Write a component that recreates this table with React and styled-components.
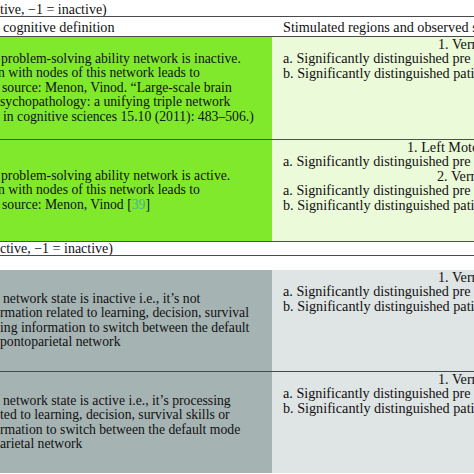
import React from 'react';
import styled, { createGlobalStyle } from 'styled-components';

const GlobalStyle = createGlobalStyle`
    html, body {
        margin:0;
        padding:0;
        background:#ffffff;
    }
`;

// 표 데이터 (잘려 보이는 부분 그대로)
const greenRows = [
    {
        left: [
            { text: 'problem-solving ability network is inactive.', shift: 1 },
            { text: 'n with nodes of this network leads to', shift: -2 },
            { text: 'source: Menon, Vinod. \u201cLarge-scale brain', shift: 2 },
            { text: 'sychopathology: a unifying triple network', shift: 0 },
            { text: 'in cognitive sciences 15.10 (2011): 483\u2013506.)', shift: 3 },
        ],
        right: [
            { text: '1. Vermis', shift: 166 },
            { text: 'a. Significantly distinguished pre and post', shift: 11 },
            { text: 'b. Significantly distinguished patients', shift: 11 },
        ],
    },
    {
        left: [
            { text: 'problem-solving ability network is active.', shift: 1 },
            { text: 'n with nodes of this network leads to', shift: -2 },
            { text: 'source: Menon, Vinod [', shift: 2, cite: '39', after: ']' },
        ],
        right: [
            { text: '1. Left Motor', shift: 135 },
            { text: 'a. Significantly distinguished pre and post', shift: 11 },
            { text: '2. Vermis', shift: 165 },
            { text: 'a. Significantly distinguished pre and post', shift: 11 },
            { text: 'b. Significantly distinguished patients', shift: 11 },
        ],
    },
];

const grayRows = [
    {
        left: [
            { text: 'network state is inactive i.e., it\u2019s not', shift: 3 },
            { text: 'rmation related to learning, decision, survival', shift: 0 },
            { text: 'ing information to switch between the default', shift: 0 },
            { text: 'pontoparietal network', shift: 0 },
        ],
        right: [
            { text: '1. Vermis', shift: 166 },
            { text: 'a. Significantly distinguished pre and post', shift: 11 },
            { text: 'b. Significantly distinguished patients', shift: 11 },
        ],
    },
    {
        left: [
            { text: 'network state is active i.e., it\u2019s processing', shift: 3 },
            { text: 'ted to learning, decision, survival skills or', shift: 0 },
            { text: 'rmation to switch between the default mode', shift: 0 },
            { text: 'arietal network', shift: 0 },
        ],
        right: [
            { text: '1. Vermis', shift: 166 },
            { text: 'a. Significantly distinguished pre and post', shift: 11 },
            { text: 'b. Significantly distinguished patients', shift: 11 },
        ],
    },
];

const renderLines = (lines) =>
    lines.map((l, i) => (
        <Line key={i} $shift={l.shift}>
            {l.text}
            {l.cite && <Cite>{l.cite}</Cite>}
            {l.after}
        </Line>
    ));

const App = () => {
    return (
        <Page>
            <GlobalStyle />
            <Caption $h={16}>tive, &minus;1 = inactive)</Caption>
            <Rule />
            <HeaderRow>
                <HeadCell>cognitive definition</HeadCell>
                <HeadCell $pad={11}>Stimulated regions and observed s</HeadCell>
            </HeaderRow>
            <Rule />
            {greenRows.map((row, i) => (
                <React.Fragment key={i}>
                    <Row $h={i === 0 ? 102 : 101}>
                        <LeftCell $bg="#80e92c">{renderLines(row.left)}</LeftCell>
                        <RightCell $bg="#ebfad9">{renderLines(row.right)}</RightCell>
                    </Row>
                    <Rule $color="rgba(40,55,35,0.85)" />
                </React.Fragment>
            ))}
            <Caption $h={13}>ctive, &minus;1 = inactive)</Caption>
            <Rule />
            <BlankHead />
            {grayRows.map((row, i) => (
                <React.Fragment key={i}>
                    <Row $h={101}>
                        <LeftCell $bg="#a6b3b3">{renderLines(row.left)}</LeftCell>
                        <RightCell $bg="#dfe4e4">{renderLines(row.right)}</RightCell>
                    </Row>
                    {i === 0 && <Rule $color="rgba(30,45,45,0.85)" />}
                </React.Fragment>
            ))}
        </Page>
    );
};

export default App;

const Page = styled.div`
    width:474px;
    height:474px;
    overflow:hidden;
    background:#ffffff;
    font-family:"Liberation Serif", "DejaVu Serif", serif;
    font-size:13.7px;
    color:#111111;
`;

const Caption = styled.div`
    height:${(p) => p.$h}px;
    line-height:13px;
    white-space:nowrap;
    overflow:hidden;
    display:flex;
    align-items:flex-end;
    font-size:14px;
`;

const Rule = styled.div`
    height:1px;
    background:${(p) => p.$color || '#4a4a4a'};
`;

const HeaderRow = styled.div`
    height:19px;
    display:grid;
    grid-template-columns:272px 1fr;
    align-items:center;
    font-size:14.2px;
    padding-top:2px;
    box-sizing:border-box;
`;

const HeadCell = styled.div`
    padding-left:${(p) => p.$pad || 3}px;
    white-space:nowrap;
    overflow:hidden;
`;

const Row = styled.div`
    height:${(p) => p.$h}px;
    display:grid;
    grid-template-columns:272px 1fr;
`;

const LeftCell = styled.div`
    background:${(p) => p.$bg};
    display:flex;
    flex-direction:column;
    justify-content:center;
    overflow:hidden;
    line-height:14.5px;
`;

const RightCell = styled.div`
    background:${(p) => p.$bg};
    display:flex;
    flex-direction:column;
    overflow:hidden;
    line-height:14.4px;
    font-size:14.2px;
`;

const Line = styled.div`
    white-space:nowrap;
    margin-left:${(p) => p.$shift}px;
`;

const Cite = styled.span`
    color:#3fb39a;
`;

const BlankHead = styled.div`
    height:14px;
`;
